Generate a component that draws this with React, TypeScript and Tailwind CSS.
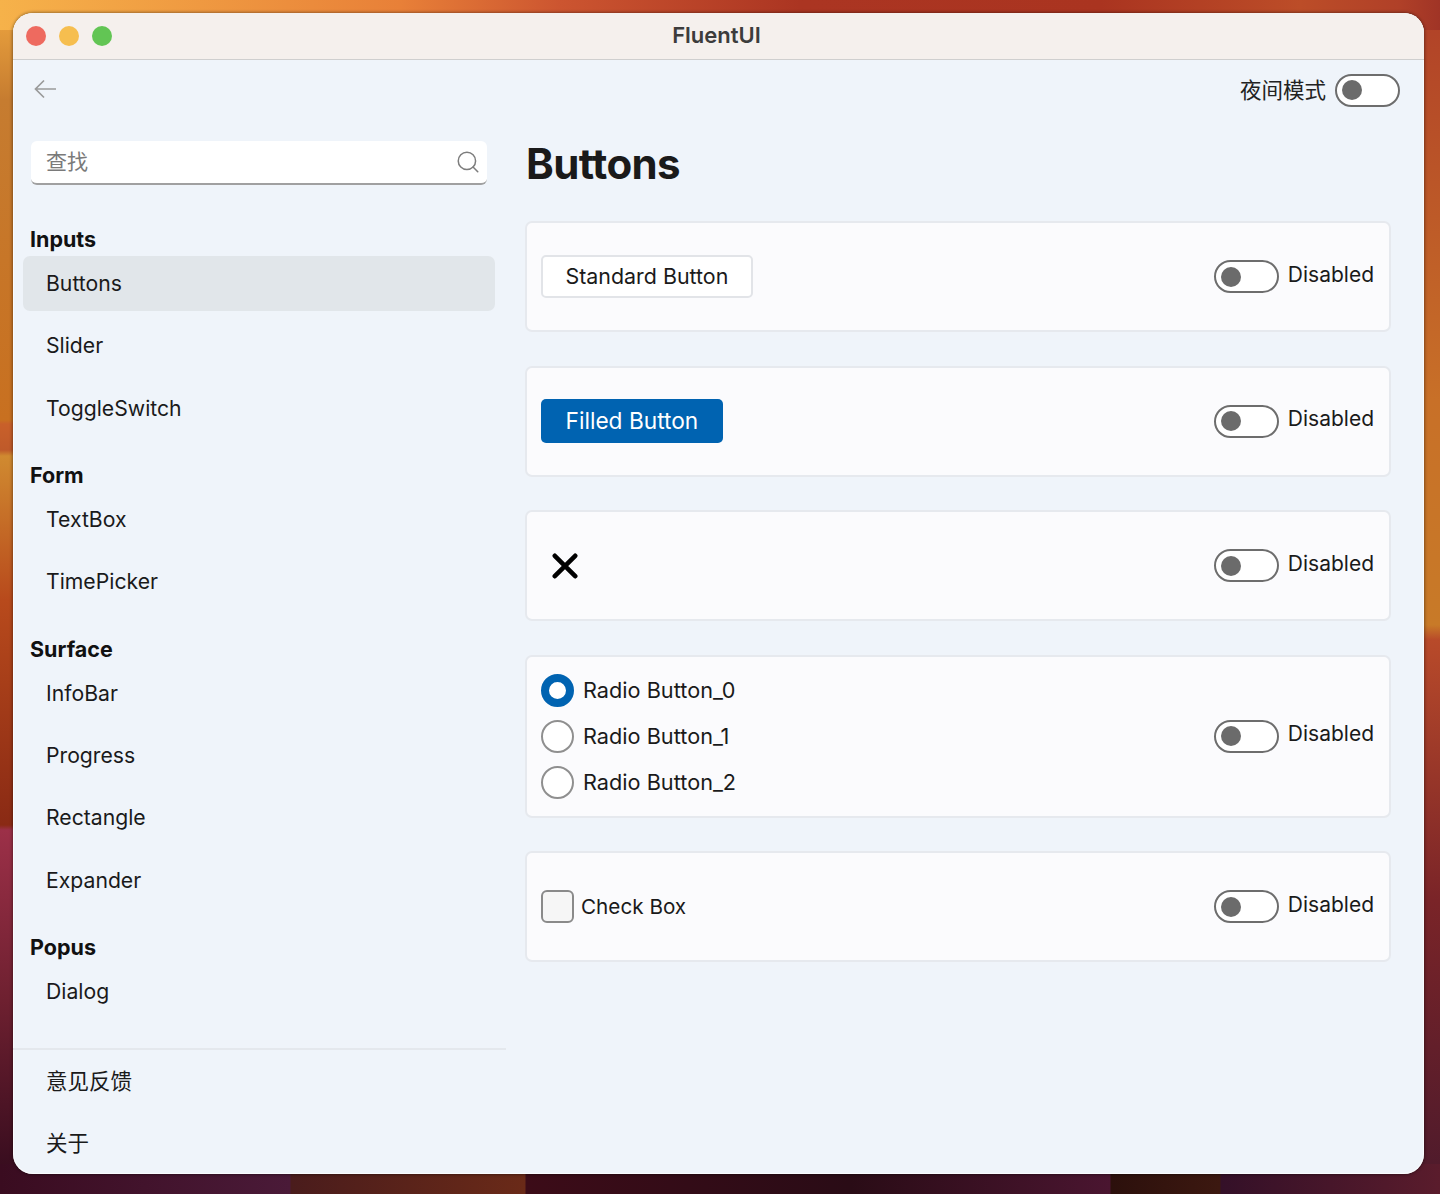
import React from 'react';
import { Search } from 'lucide-react';

const cjk = "font-['Inter','Noto_Sans_CJK_SC',sans-serif]";

// only the strips round the window are visible, so the wallpaper is four edge gradients
const wallpaper =
  '[background:linear-gradient(90deg,#f6b24a_0px,#e88038_400px,#cc5530_560px,#ab3522_800px,#aa3420_1100px,#bc4d28_1300px,#b04028_1400px,#a03426_1440px)_0_0/100%_30px_no-repeat,linear-gradient(90deg,#3a0c20_0px,#4a1a38_290px,#4a1c1c_291px,#6a2a18_525px,#3c0c18_526px,#2a0c16_850px,#4a1530_1110px,#2c100c_1111px,#3c1810_1220px,#341028_1221px,#5a1c2c_1440px)_0_100%/100%_30px_no-repeat,linear-gradient(180deg,#f0a840_0px,#c67c30_100px,#c87020_420px,#c9602a_424px,#bf5a2a_450px,#d08a30_456px,#b84a1c_600px,#8a2a14_825px,#9c3048_830px,#6e2030_1000px,#300a1c_1194px)_0_0/20px_100%_no-repeat,linear-gradient(180deg,#b04028_0px,#c87028_400px,#c87a28_625px,#b84a2a_640px,#7a2428_900px,#4c1a2c_1194px)_100%_0/20px_100%_no-repeat,#7a3020]';

const navGroups = [
  { title: 'Inputs', items: ['Buttons', 'Slider', 'ToggleSwitch'] },
  { title: 'Form', items: ['TextBox', 'TimePicker'] },
  { title: 'Surface', items: ['InfoBar', 'Progress', 'Rectangle', 'Expander'] },
  { title: 'Popus', items: ['Dialog'] },
];

const Toggle: React.FC = () => (
  <div className="flex h-[33px] w-[65px] shrink-0 items-center rounded-full border-2 border-[#6d6d6d] bg-white pl-[5px]">
    <div className="h-[20px] w-[20px] rounded-full bg-[#6b6b6b]" />
  </div>
);

const Card: React.FC<{ tall?: boolean; children: React.ReactNode }> = ({ tall, children }) => (
  <div className={`flex items-center justify-between rounded-[7px] border-2 border-[#e6e9ee] bg-[#fbfbfd] pl-[14px] pr-[15px] ${tall ? 'h-[163px]' : 'h-[111px]'}`}>
    <div>{children}</div>
    <div className="flex items-center gap-[9px]">
      <Toggle />
      <span className="mb-[4px] text-[21px] text-[#1a1a1a]">Disabled</span>
    </div>
  </div>
);

const Radio: React.FC<{ label: string; on?: boolean }> = ({ label, on }) => (
  <div className="flex h-[33px] items-center gap-[9px]">
    {on ? (
      <div className="h-[33px] w-[33px] rounded-full border-[8px] border-[#0063b1] bg-white" />
    ) : (
      <div className="h-[33px] w-[33px] rounded-full border-2 border-[#8f8f8f] bg-white" />
    )}
    <span className="text-[21.7px] text-[#1a1a1a]">{label}</span>
  </div>
);

export default function App() {
  return (
    <div className={`h-[1194px] w-[1440px] overflow-hidden pl-[13px] pt-[13px] ${wallpaper}`}>
      <div className={`flex h-[1161px] w-[1411px] flex-col overflow-hidden rounded-[20px] bg-[#eff4fa] shadow-[inset_0_0_0_1px_rgba(255,255,255,0.7),0_0_3px_1px_rgba(0,0,0,0.35)] ${cjk}`}>
        <div className="flex h-[47px] shrink-0 items-center border-b border-[#cfcfcf] bg-[#f5f0ed] pl-[13px]">
          <div className="flex gap-[13px]">
            <div className="h-[20px] w-[20px] rounded-full bg-[#ee6a5f]" />
            <div className="h-[20px] w-[20px] rounded-full bg-[#f6be4f]" />
            <div className="h-[20px] w-[20px] rounded-full bg-[#62c554]" />
          </div>
          <div className="flex-1 pb-[1px] pr-[103px] text-center text-[22px] font-semibold text-[#3c3c3c]">FluentUI</div>
        </div>
        <div className="flex min-h-0 flex-1">
          <div className="flex w-[493px] shrink-0 flex-col">
            <div className="pl-[21px] pt-[19px]">
              <svg viewBox="0 0 22 20" className="h-[20px] w-[22px]" fill="none" stroke="#9a9a9a" strokeWidth="1.7">
                <path d="M22 10H1.5M10 1.5 1.5 10 10 18.5" />
              </svg>
            </div>
            <div className="ml-[18px] mt-[42px] flex h-[44px] w-[456px] items-center justify-between rounded-[6px] border-b-2 border-[#a0a0a0] bg-white pl-[15px] pr-[6px] text-[21px] text-[#7a7a7a]">
              <span>查找</span>
              <Search size={26} strokeWidth={1.4} className="text-[#7d7d7d]" />
            </div>
            <div className="mt-[40px] flex flex-1 flex-col pl-[10px] pr-[11px]">
              {navGroups.map((group) => (
                <div key={group.title} className="mb-[25.5px]">
                  <div className="flex h-[31px] items-center pb-[2px] pl-[7px] text-[21.5px] font-bold text-[#111]">{group.title}</div>
                  <div className="flex flex-col gap-[7.25px]">
                    {group.items.map((item) => (
                      <div
                        key={item}
                        className={`flex h-[55px] items-center rounded-[7px] pl-[23px] pt-[1px] text-[21.2px] text-[#1a1a1a] ${item === 'Buttons' ? 'bg-[#e1e6ea]' : ''}`}
                      >
                        {item}
                      </div>
                    ))}
                  </div>
                </div>
              ))}
            </div>
            <div className="border-t-2 border-[#e4e8ed] px-[10px] pb-[3px] pt-[4px]">
              <div className="flex flex-col gap-[7px]">
                <div className="flex h-[55px] items-center pl-[23px] text-[21.5px] text-[#1a1a1a]">意见反馈</div>
                <div className="flex h-[55px] items-center pl-[23px] text-[21.5px] text-[#1a1a1a]">关于</div>
              </div>
            </div>
          </div>
          <div className="flex min-w-0 flex-1 flex-col pl-[19px] pr-[33px]">
            <div className="-mr-[9px] flex h-[48px] items-center justify-end gap-[9px] pt-[12px]">
              <span className="text-[21.5px] text-[#222]">夜间模式</span>
              <Toggle />
            </div>
            <h1 className="mt-[24px] h-[89px] pl-[1px] text-[42px] font-bold tracking-[-0.6px] text-[#1a1a1a]">Buttons</h1>
            <div className="flex flex-col gap-[33.5px]">
              <Card>
                <button className="flex h-[43px] items-center rounded-[5px] border-2 border-[#e2e4e8] bg-white px-[22.5px] text-[21.4px] text-[#1a1a1a]">Standard Button</button>
              </Card>
              <Card>
                <button className="flex h-[44px] items-center rounded-[5px] bg-[#0063b1] px-[24.5px] text-[22.7px] text-white">Filled Button</button>
              </Card>
              <Card>
                <svg viewBox="0 0 26 26" className="ml-[11px] h-[26px] w-[26px]" fill="none" stroke="#000" strokeWidth="4.6" strokeLinecap="round">
                  <path d="M2.8 2.8 23.2 23.2M23.2 2.8 2.8 23.2" />
                </svg>
              </Card>
              <Card tall>
                <div className="flex flex-col gap-[13px]">
                  <Radio label="Radio Button_0" on />
                  <Radio label="Radio Button_1" />
                  <Radio label="Radio Button_2" />
                </div>
              </Card>
              <Card>
                <div className="flex items-center gap-[7px]">
                  <div className="h-[33px] w-[33px] rounded-[6px] border-2 border-[#8a8a8a] bg-[#f6f6f6]" />
                  <span className="text-[20.7px] text-[#1a1a1a]">Check Box</span>
                </div>
              </Card>
            </div>
          </div>
        </div>
      </div>
    </div>
  );
}
